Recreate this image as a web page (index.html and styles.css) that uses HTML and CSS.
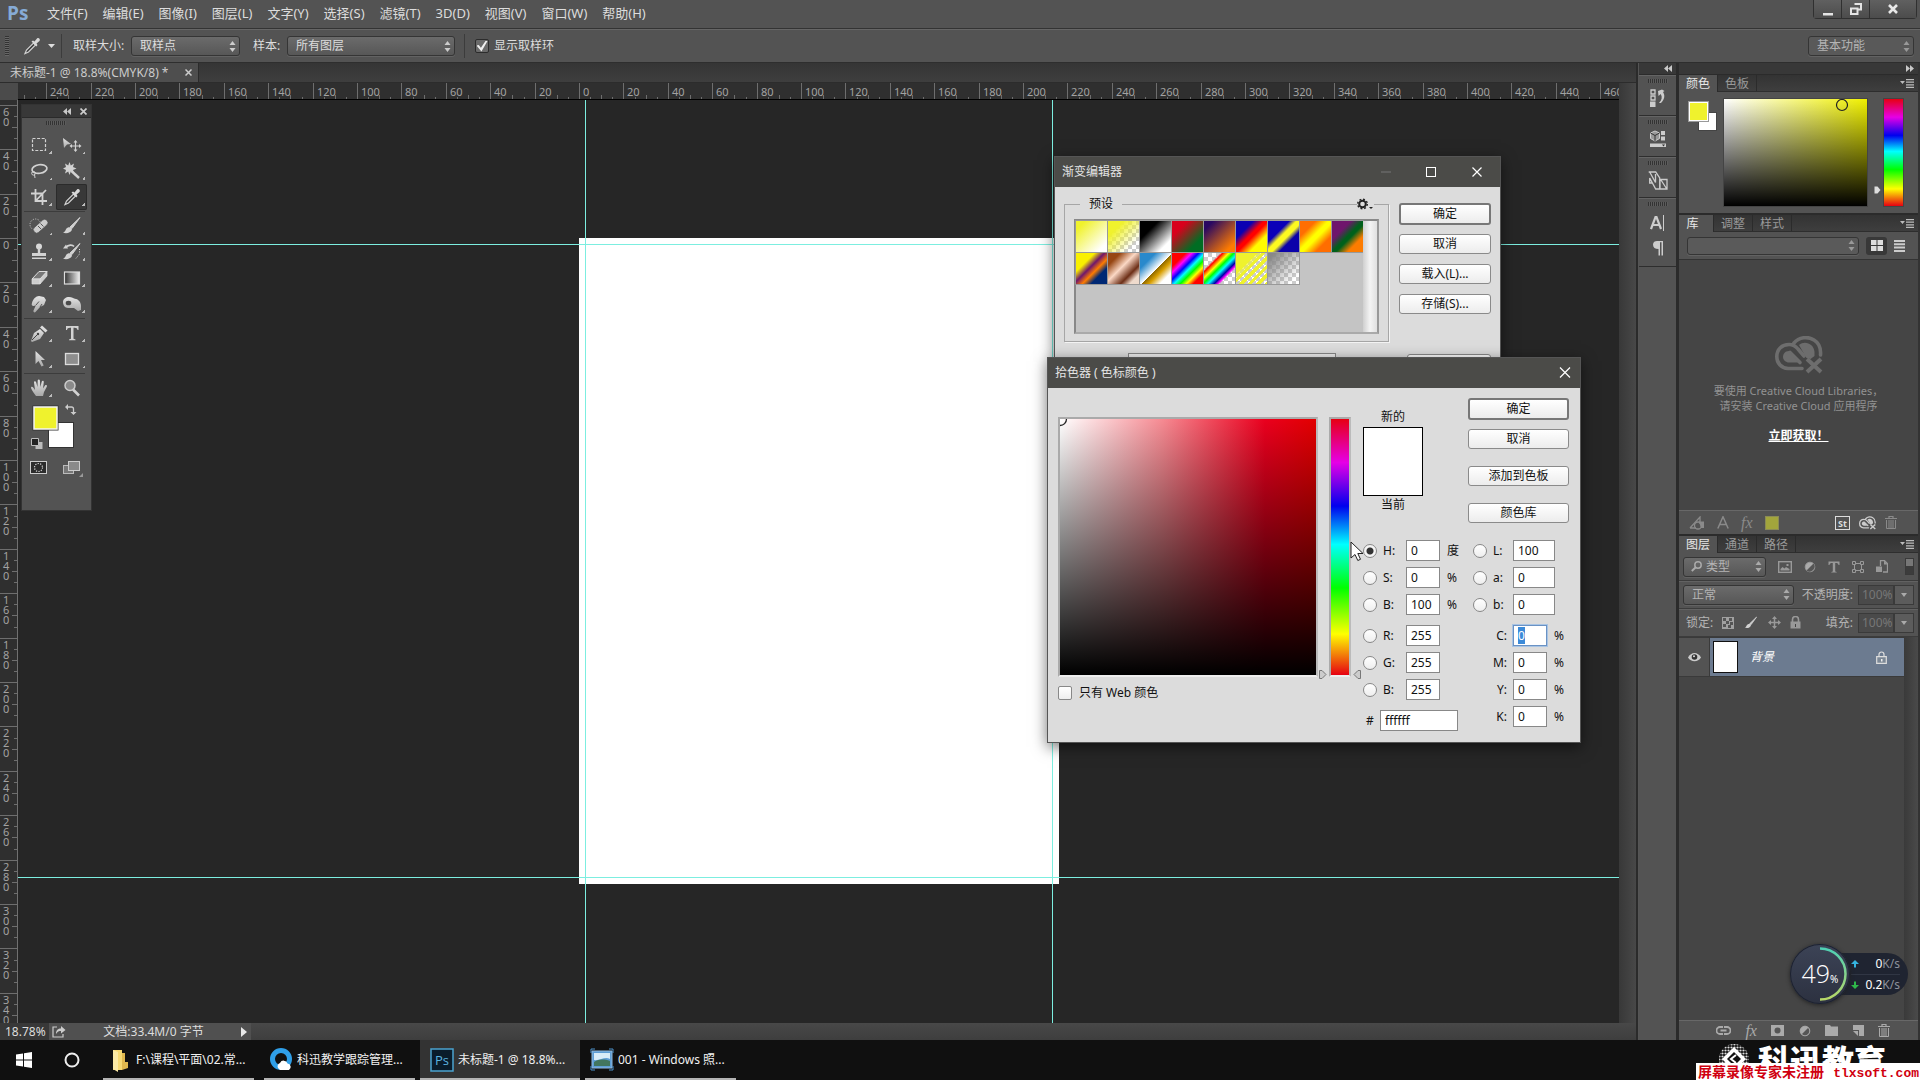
FILE: index.html
```html
<!DOCTYPE html>
<html lang="zh-CN">
<head>
<meta charset="utf-8">
<title>未标题-1 @ 18.8%(CMYK/8)</title>
<link rel="stylesheet" href="styles.css">
</head>
<body>
<svg class="defs" aria-hidden="true">
  <defs>
    <linearGradient id="metal" x1="0" y1="0" x2="0" y2="1"><stop offset="0" stop-color="#e4e4e4"/><stop offset="1" stop-color="#a8a8a8"/></linearGradient>
    <linearGradient id="fade" x1="0" y1="0" x2="1" y2="0"><stop offset="0" stop-color="#333"/><stop offset="1" stop-color="#eee"/></linearGradient>
    <linearGradient id="arc" x1="0" y1="0" x2="0" y2="1"><stop offset="0" stop-color="#4fd0b4"/><stop offset="1" stop-color="#b8d868"/></linearGradient>
    <pattern id="dots" width="3" height="3" patternUnits="userSpaceOnUse"><circle cx="1.5" cy="1.5" r="1.1" fill="#ddd"/></pattern>
    <symbol id="updown" viewBox="0 0 7 11"><path d="M3.500 0L6.500 4H.5zM3.500 11L6.500 7H.5z" fill="currentColor"/></symbol>
    <symbol id="panelmenu" viewBox="0 0 14 9"><path d="M0 2h5L2.500 5zM6 0h8v1.200H6zM6 2.600h8v1.200H6zM6 5.200h8v1.200H6zM6 7.800h8V9H6z" fill="currentColor"/></symbol>
    <symbol id="back" viewBox="0 0 8 7"><path d="M4 0v7L0 3.500zM8 0v7L4 3.500z" fill="#c8c8c8"/></symbol>
    <symbol id="dropper" viewBox="0 0 20 20"><path d="M3 17.500l1.500-3.500 7-7 2 2-7 7z" fill="#3a3a3a" stroke="#d2d2d2" stroke-width="1.200"/><path d="M9.500 5.500l1.500-1 1.500 1 2.500-3c1.500-1.500 3.800.7 2.500 2.500l-3 2.500 1 1.500-1.200 1.500z" fill="#d8d8d8"/></symbol>
    <symbol id="trash" viewBox="0 0 12 13"><path d="M0 2.500h12M4 2V.5h4V2" fill="none" stroke="currentColor" stroke-width="1.200"/><path d="M1.500 4v8.500h9V4M4 4v8M6 4v8M8 4v8" fill="none" stroke="currentColor"/></symbol>
    <symbol id="brush" viewBox="0 0 20 20"><path d="M18 1.500L10 12.500 8 11z" fill="#d2d2d2" stroke="#d2d2d2"/><path d="M8.500 11.500c2 1 2 3-.5 4.500s-5 1.500-7 .5c2-.5 2-1.500 3-3.200s3-2.300 4.500-1.800z" fill="#d2d2d2"/></symbol>
    <symbol id="cloud" viewBox="0 0 48 38"><g fill="none" stroke="currentColor" stroke-width="3.600" stroke-linecap="round"><path d="M19 7C24 1 33 0 39 4c5 3 7 9 6.500 15M27 32.500H13C6 32 1.800 27 1.800 20.500 2 13 7 8.500 14 8.500c4 0 7 2 9 4.500l6 7"/><path d="M25 26.500L15 16.500"/></g><path d="M14 15c-4 0-6 3-6 6s3 5.500 6 5.500h9zM24 9c6-5 15-1 15.500 7v4l-4 3-4-1z" fill="currentColor"/><path d="M32 23l14 13M46 23L32 36" stroke="currentColor" stroke-width="4"/></symbol>
  </defs>
</svg>

<header class="menubar">
  <span class="brand">Ps</span>
  <nav class="menus">
    <button>文件(F)</button><button>编辑(E)</button><button>图像(I)</button><button>图层(L)</button><button>文字(Y)</button><button>选择(S)</button><button>滤镜(T)</button><button>3D(D)</button><button>视图(V)</button><button>窗口(W)</button><button>帮助(H)</button>
  </nav>
  <div class="winctl">
    <button aria-label="最小化"><svg width="12" height="16"><path d="M1 12h10v2.500H1z" fill="#e4e4e4"/></svg></button>
    <button aria-label="还原"><svg width="14" height="14"><path d="M5.500 2h6.500v5.500H8.500M2 6.500h6.500V12H2z" fill="none" stroke="#e4e4e4" stroke-width="2"/></svg></button>
    <button class="wide" aria-label="关闭"><svg width="12" height="12"><path d="M2 2l8 8M10 2l-8 8" stroke="#e8e8e8" stroke-width="2.600"/></svg></button>
  </div>
</header>

<div class="options">
  <span class="grip-v"></span>
  <svg class="opt-tool" width="20" height="20"><use href="#dropper"/></svg>
  <svg class="opt-drop" width="7" height="4"><path d="M0 0h7L3.500 4z" fill="#ddd"/></svg>
  <span class="rule"></span>
  <label for="size">取样大小:</label>
  <span class="pick size"><select id="size"><option>取样点</option></select><svg><use href="#updown"/></svg></span>
  <label for="sample" class="second">样本:</label>
  <span class="pick sample"><select id="sample"><option>所有图层</option></select><svg><use href="#updown"/></svg></span>
  <span class="rule"></span>
  <label class="ring"><input type="checkbox" checked>显示取样环</label>
  <span class="pick workspace"><select aria-label="工作区"><option>基本功能</option></select><svg><use href="#updown"/></svg></span>
</div>

<main class="work">
  <section class="doc">
    <div class="doctabs"><div class="doctab"><span>未标题-1 @ 18.8%(CMYK/8) *</span><button aria-label="关闭标签"><svg width="7" height="7"><path d="M.5.5l6 6M6.500.5l-6 6" stroke="#ccc" stroke-width="1.500"/></svg></button></div></div>
    <div class="stage">
      <div class="corner"></div>
      <svg class="hruler" id="hruler"></svg>
      <svg class="vruler" id="vruler"></svg>
      <div class="canvas">
        <div class="page"></div>
        <i class="guide v g1"></i><i class="guide v g2"></i><i class="guide h g3"></i><i class="guide h g4"></i>
        <aside class="toolbox">
          <div class="toolhead"><svg width="8" height="7"><use href="#back"/></svg><svg width="7" height="7"><path d="M.5.5l6 6M6.500.5l-6 6" stroke="#ccc" stroke-width="1.700"/></svg></div>
          <span class="grip-h"></span>
          <div class="tools">
            <button aria-label="选框"><svg viewBox="0 0 20 20"><rect x="3.500" y="3.500" width="13" height="12" fill="none" stroke="#d2d2d2" stroke-width="1.200" stroke-dasharray="3 1.600"/></svg></button>
            <button aria-label="移动"><svg viewBox="0 0 20 20"><path d="M1 3l8 6-4 .6L2 13z" fill="url(#metal)"/><path d="M13.500 6.500v9M9 11h9" stroke="#d2d2d2" stroke-width="1.200"/><path d="M13.500 5l2 2.500h-4zM13.500 17l2-2.500h-4zM7.500 11L10 9v4zM19.500 11L17 9v4z" fill="#d2d2d2"/></svg></button>
            <button aria-label="套索"><svg viewBox="0 0 20 20"><ellipse cx="10.500" cy="8" rx="7.500" ry="4.300" transform="rotate(-8 10.500 8)" fill="none" stroke="#d2d2d2" stroke-width="1.700"/><circle cx="4.500" cy="12.300" r="1.800" fill="none" stroke="#d2d2d2"/><path d="M5.500 13.500l.5 3.500" stroke="#d2d2d2"/></svg></button>
            <button aria-label="魔棒"><svg viewBox="0 0 20 20"><path d="M7.500 1l1.300 3.500L12 2.500 11 6l3.500 1.500L11 9l1 3.500-3.200-2L7.500 14l-1.300-3.500L3 12.500 4 9 1 7.500 4 6 3 2.500l3.200 2z" fill="#d2d2d2"/><path d="M9.500 10l7.500 7" stroke="#d2d2d2" stroke-width="2.400"/></svg></button>
            <button aria-label="裁剪"><svg viewBox="0 0 20 20"><path d="M6.500 2v12H18M2 6.500h11.500V18M7 13.500L17 3" fill="none" stroke="#d2d2d2" stroke-width="1.800"/></svg></button>
            <button class="on" aria-label="吸管"><svg viewBox="0 0 20 20"><use href="#dropper"/></svg></button>
            <hr>
            <button aria-label="修复画笔"><svg viewBox="0 0 20 20"><circle cx="6.500" cy="8.500" r="5.500" fill="none" stroke="#d2d2d2" stroke-dasharray="1 1.500"/><rect x="3" y="7" width="17" height="6.500" rx="3" transform="rotate(-42 11.500 10)" fill="#ccc" stroke="#444" stroke-width=".6"/><path d="M9 10l3 3M11.500 7.500l3 3" stroke="#555"/></svg></button>
            <button aria-label="画笔"><svg viewBox="0 0 20 20"><use href="#brush"/></svg></button>
            <button aria-label="图章"><svg viewBox="0 0 20 20"><circle cx="10" cy="4.500" r="3" fill="#d8d8d8"/><path d="M8.800 6h2.400v5H17v3H3v-3h5.800zM3 15.500h14V17H3z" fill="#d2d2d2"/></svg></button>
            <button aria-label="历史画笔"><svg viewBox="0 0 20 20"><use href="#brush"/><path d="M3.500 5.500c3-3 7-3 8.500-1" fill="none" stroke="#d2d2d2" stroke-width="1.600"/><path d="M1 6.500l3-4 2 4z" fill="#d2d2d2"/><path d="M17.500 7v5l-4 5" stroke="#ddd" stroke-dasharray="1 1.400" fill="none"/></svg></button>
            <button aria-label="橡皮擦"><svg viewBox="0 0 20 20"><path d="M3 11l7-7.500h8L11 11z" fill="#777" stroke="#ddd"/><path d="M3 11h8v5H3zM11 11l7-7.500V8l-7 8z" fill="#ccc" stroke="#ddd" stroke-width=".7"/></svg></button>
            <button aria-label="渐变"><svg viewBox="0 0 20 20"><rect x="2.500" y="4" width="15" height="12" fill="url(#fade)" stroke="#ddd" stroke-width="1.200"/></svg></button>
            <button aria-label="涂抹"><svg viewBox="0 0 20 20"><path d="M3 9c1-4 4-7 7-7 2 0 3 1 5 1l2 3-2 5-4 2-4.500 5c-1 1-2.500 0-2-1.500L7 11l-2 1c-1.500.5-3-1-2-3z" fill="url(#metal)"/><path d="M7 11l3-3.500M11 13l2-3" stroke="#555" fill="none"/></svg></button>
            <button aria-label="海绵"><svg viewBox="0 0 20 20"><path d="M1 8c0-3 3-5 6-5s4 1.500 7 2 5 4 5 7v4l-3 1-4-3H6c-3 0-5-3-5-6z" fill="url(#metal)"/><ellipse cx="6.500" cy="9" rx="2.800" ry="2.300" fill="#4a4a4a"/></svg></button>
            <hr>
            <button aria-label="钢笔"><svg viewBox="0 0 20 20"><path d="M2 18l3-8 6-4 4 4-4 6-8 3z" fill="url(#metal)"/><path d="M3 17l5.500-5.500" stroke="#444"/><circle cx="9" cy="11" r="1.200" fill="#444"/><path d="M12 3.500l5.500 5" stroke="#ddd" stroke-width="3"/></svg></button>
            <button aria-label="文字"><svg viewBox="0 0 20 20"><path d="M4 3h12.500v4h-1c-.3-1.500-1-2.300-3-2.300h-1v11l2 .8v.7H7v-.7l2-.8v-11H8C6 4.700 5.300 5.500 5 7H4z" fill="#d2d2d2"/></svg></button>
            <button aria-label="路径选择"><svg viewBox="0 0 20 20"><path d="M6.500 2v13l3-3 3 5.500 2.200-1-2.700-5.500h4z" fill="url(#metal)"/></svg></button>
            <button aria-label="矩形"><svg viewBox="0 0 20 20"><rect x="3.500" y="4.500" width="13" height="11" fill="#8e8e8e" stroke="#ddd" stroke-width="1.300"/></svg></button>
            <hr>
            <button aria-label="抓手"><svg viewBox="0 0 20 20"><path d="M7 18c-2-3-4-5-5-8 0-1.500 1.500-1.500 2.200-.5L6 12 5 4.500c0-1.600 1.800-1.600 2.200 0L8.500 9l.2-6.500c.2-1.500 2-1.500 2.200 0L11.300 9l1.500-5.500c.5-1.300 2-1 2 .5l-.8 6.500 2-3c1-1 2.400-.3 1.800 1.200L15 14l-1 4z" fill="url(#metal)"/></svg></button>
            <button class="plain" aria-label="缩放"><svg viewBox="0 0 20 20"><path d="M11 11.500l6 6" stroke="#d2d2d2" stroke-width="2.600"/><circle cx="8" cy="7.500" r="5" fill="#8a8a8a" stroke="#ccc" stroke-width="1.500"/></svg></button>
          </div>
          <svg class="swatches" width="48" height="46" viewBox="0 0 48 46"><rect x="18.500" y="18.500" width="25" height="25" fill="#fff" stroke="#333"/><rect x="2.500" y="1.500" width="26" height="25" fill="#333"/><rect x="4" y="3" width="23" height="22" fill="#eff22d" stroke="#f4f4f4" stroke-width="1.500"/><path d="M38 3h3.500c1.500 0 2 .8 2 2v4" fill="none" stroke="#ccc" stroke-width="1.300"/><path d="M35 3l3-3v6zM43.500 11l-3-3h6z" fill="#ccc"/><path d="M5.500 38h7v7h-7z" fill="#bbb"/><path d="M1.500 34.500h7v7h-7z" fill="#222" stroke="#bbb"/></svg>
          <div class="modes"><svg width="17" height="13"><rect x=".5" y=".5" width="16" height="12" fill="#2c2c2c" stroke="#ccc"/><circle cx="8.500" cy="6.500" r="4" fill="none" stroke="#ddd" stroke-width="1.200" stroke-dasharray="1.200 1.300"/></svg><svg width="20" height="16"><rect x=".5" y="4.500" width="10" height="8" fill="#777" stroke="#bbb"/><rect x="5.500" y=".5" width="11" height="9" fill="#8a8a8a" stroke="#ccc"/><path d="M20 12v4h-4z" fill="#999"/></svg></div>
        </aside>
      </div>
      <div class="vscroll"></div>
    </div>
    <footer class="status">
      <input class="zoom" value="18.78%" aria-label="缩放比例">
      <div class="docinfo"><svg width="14" height="13"><path d="M5 2H1v10h10V9" fill="none" stroke="#ccc" stroke-width="1.200"/><path d="M4 9c0-4 2-5.500 5-5.500V1l4.500 4L9 8.500V6C7 6 5.500 6.500 4 9z" fill="#ccc"/></svg><span>文档:33.4M/0 字节</span><svg width="7" height="10"><path d="M0 0l6 5-6 5z" fill="#e8e8e8"/></svg></div>
    </footer>
  </section>

  <aside class="strip">
    <div class="dockhead"><svg width="8" height="7"><use href="#back"/></svg></div>
    <div class="group"><span class="grip-h"></span><svg width="16" height="18" viewBox="0 0 16 18"><path d="M1 1h4v4H1zM1 7h4v4H1z" fill="none" stroke="#ccc" stroke-width="1.300"/><path d="M0 12.500h5.500V18H0z" fill="#ccc"/><path d="M8 2l4-1.500L14.500 2l-1.500 1c2 3 2 7-2 11h-2c3-3 3.500-6 1.700-9L8.500 7z" fill="#ccc"/></svg></div>
    <div class="group"><span class="grip-h"></span><svg width="16" height="18" viewBox="0 0 16 18"><path d="M5 1l4.500 2v5.500L5 11 .5 8.500V3z" fill="#999" stroke="#ccc"/><path d="M.5 3L5 5.500 9.500 3M5 5.500V11" stroke="#333" fill="none"/><path d="M11 1h4v4h-4zM11 6.500h4v4h-4zM0 13.500h16V17H0z" fill="#ccc"/><path d="M12 14.500h3l-1.500 2z" fill="#333"/></svg></div>
    <div class="group"><span class="grip-h"></span><svg width="20" height="19" viewBox="0 0 20 19"><path d="M.7 1h7l4 6v11h-4L1.700 7v5h2.500M7.500 3v8.500L1.700 1M12 8.500h7V18h-7zM13 9l5.500 8.500" fill="none" stroke="#ccc" stroke-width="1.300"/></svg></div>
    <div class="group two"><span class="grip-h"></span><svg width="16" height="16" viewBox="0 0 16 16"><path d="M1 14L5.500 2h1L11 14M3 10h6" stroke="#ccc" stroke-width="2.200" fill="none"/><path d="M13.500 0v16" stroke="#ccc"/></svg><svg width="12" height="16" viewBox="0 0 12 16"><path d="M1 4.500C1 2 3 1 5 1h6v14.500H9.500V2.300H8v13.200H6.500V9C3 9 1 7.500 1 4.500z" fill="#ccc"/></svg></div>
  </aside>

  <aside class="panels">
    <div class="dockhead"><svg class="flip" width="8" height="7"><use href="#back"/></svg></div>
    <section class="colorpanel">
      <div class="tabs"><button class="on">颜色</button><button>色板</button><svg class="menu"><use href="#panelmenu"/></svg></div>
      <div class="colorbody">
        <svg width="30" height="32"><rect x="10.500" y="11.500" width="18" height="18" fill="#fff" stroke="#444"/><rect x="0" y="0" width="21" height="21" fill="#999"/><rect x="1.500" y="1.500" width="18" height="18" fill="#eff22d" stroke="#fff"/></svg>
        <div class="yfield"><svg width="14" height="14"><circle cx="7" cy="6" r="5.500" fill="none" stroke="#222" stroke-width="1.200"/></svg></div>
        <svg class="knob" width="7" height="8"><path d="M.5.5h3l3 3.500-3 3.500h-3z" fill="#ddd"/></svg>
        <div class="hue small"></div>
      </div>
    </section>
    <section class="library">
      <div class="tabs"><button class="on narrow">库</button><button>调整</button><button>样式</button><svg class="menu"><use href="#panelmenu"/></svg></div>
      <div class="libbar"><span class="pick lib"><select aria-label="库列表"><option></option></select><svg><use href="#updown"/></svg></span><button class="gridbtn" aria-label="网格"><svg width="12" height="11"><path d="M0 0h5.500v5H0zM6.500 0H12v5H6.500zM0 6h5.500v5H0zM6.500 6H12v5H6.500z" fill="#ddd"/></svg></button><button class="listbtn" aria-label="列表"><svg width="11" height="12"><path d="M0 0h11v2H0zM0 3.300h11v2H0zM0 6.600h11v2H0zM0 10h11v2H0z" fill="#ccc"/></svg></button></div>
      <div class="libbody">
        <svg class="cloud" width="48" height="38"><use href="#cloud"/></svg>
        <p>要使用 Creative Cloud Libraries，<br>请安装 Creative Cloud 应用程序</p>
        <a href="#">立即获取！</a>
      </div>
      <div class="foot lib-foot">
        <svg width="16" height="14"><path d="M1 12L11 1v7M1 12h6" fill="none" stroke="#8a8a8a" stroke-width="1.300"/><circle cx="9" cy="9.500" r="3.500" fill="none" stroke="#8a8a8a" stroke-width="1.300"/><path d="M10 5.500h5V12h-3z" fill="#8a8a8a"/></svg>
        <svg width="12" height="13"><path d="M.8 12.500L6 .8l5.200 11.700M2.500 8.500h7" fill="none" stroke="#8a8a8a" stroke-width="1.500"/></svg>
        <em>fx</em><i class="chip"></i>
        <div class="push">
          <svg width="15" height="14"><rect x=".5" y=".5" width="14" height="13" fill="none" stroke="#ddd"/><text x="3" y="11">St</text></svg>
          <svg class="smallcloud" width="17" height="14"><use href="#cloud"/></svg>
          <svg width="12" height="13"><use href="#trash"/></svg>
        </div>
      </div>
    </section>
    <section class="layers">
      <div class="tabs"><button class="on">图层</button><button>通道</button><button>路径</button><svg class="menu"><use href="#panelmenu"/></svg></div>
      <div class="lrow filter"><span class="pick kind"><svg class="lens" width="12" height="11"><circle cx="7" cy="4" r="3.200" fill="none" stroke="#aaa" stroke-width="1.500"/><path d="M4.500 6.500L.8 10" stroke="#aaa" stroke-width="2"/></svg><select aria-label="滤镜类型"><option>类型</option></select><svg><use href="#updown"/></svg></span>
        <svg width="14" height="12"><rect x=".7" y=".7" width="12.600" height="10.600" fill="none" stroke="#999" stroke-width="1.400"/><path d="M2.500 9.500V8l2-2 2 1.500L8 6l3.500 2v1.500zM8.500 3h2v2h-2z" fill="#999"/></svg>
        <svg width="12" height="12"><circle cx="6" cy="6" r="4.800" fill="#aaa" stroke="#999"/><path d="M9.500 2.500a5 5 0 0 1-7 7z" fill="#555"/></svg>
        <svg width="12" height="12"><path d="M.5.5h11V4h-1c-.3-1.500-1-2-2.500-2H7.200v8.500l1.500.5v.5H3.300V11l1.500-.5V2H4c-1.500 0-2.200.5-2.500 2h-1z" fill="#999"/></svg>
        <svg width="12" height="12"><path d="M2.500 2.500h7v7h-7z" fill="none" stroke="#999"/><path d="M.5.5h3v3h-3zM8.500.5h3v3h-3zM.5 8.500h3v3h-3zM8.500 8.500h3v3h-3z" fill="#555" stroke="#999"/></svg>
        <svg width="12" height="13"><path d="M4.500 6V.7h4l3 3V12H7" fill="none" stroke="#999" stroke-width="1.300"/><path d="M8 .5v4h3.500M0 6.500h6V12H0z" fill="#999"/></svg>
        <i class="switch"></i></div>
      <div class="lrow"><span class="pick blend"><select aria-label="混合模式"><option>正常</option></select><svg><use href="#updown"/></svg></span><label class="pct">不透明度:<input value="100%"></label><button class="drop" aria-label="不透明度滑块"><svg width="6" height="4"><path d="M0 0h6L3 4z" fill="#aaa"/></svg></button></div>
      <div class="lrow lock"><span>锁定:</span>
        <svg width="12" height="12"><rect width="12" height="12" fill="#a0a0a0"/><path d="M1 1h3v3H1zM7 1h3v3H7zM4 4h3v3H4zM8 5h3v3H8zM1 7h3v3H1zM6 8h3v3H6z" fill="#555"/></svg>
        <svg width="16" height="14" viewBox="0 0 20 20"><use href="#brush"/></svg>
        <svg width="13" height="13"><path d="M6.500 1.500v10M1.500 6.500h10" stroke="#999" stroke-width="1.500"/><path d="M6.500 0L9 3H4zM6.500 13L9 10H4zM0 6.500L3 4v5zM13 6.500L10 4v5z" fill="#999"/></svg>
        <svg width="11" height="13"><path d="M2.500 6V3.500a3 3 0 0 1 6 0V6" fill="none" stroke="#999" stroke-width="1.600"/><path d="M.5 5.500h10v7H.5z" fill="#999"/><path d="M5 8h1v3H5z" fill="#444"/></svg>
        <label class="pct">填充:<input value="100%"></label><button class="drop" aria-label="填充滑块"><svg width="6" height="4"><path d="M0 0h6L3 4z" fill="#aaa"/></svg></button></div>
      <div class="list">
        <div class="layer"><span class="eye"><svg width="13" height="10"><path d="M0 5.500c3-6 10-6 13 0-3 5-10 5-13 0z" fill="#ccc"/><circle cx="6.500" cy="5" r="2.800" fill="#333"/><circle cx="6" cy="4.200" r="1" fill="#ddd"/></svg></span><i class="thumb"></i><em>背景</em><svg width="11" height="13"><path d="M3 6V3.500a2.500 2.500 0 0 1 5 0V6" fill="none" stroke="#ddd" stroke-width="1.200"/><path d="M.7 5.700h9.600v6.600H.7z" fill="#7c8896" stroke="#ddd" stroke-width="1.200"/><path d="M5 8h1.500v2.500H5z" fill="#eee"/></svg></div>
        <div class="listscroll"></div>
      </div>
      <div class="foot layer-foot">
        <svg width="15" height="9"><path d="M7 1H4a3 3 0 0 0 0 7h3M8 1h3a3 3 0 0 1 0 7H8M4.500 4.500h6" fill="none" stroke="#aaa" stroke-width="1.800"/></svg>
        <em>fx</em>
        <svg width="13" height="11"><path d="M0 0h13v11H0z" fill="#aaa"/><circle cx="6.500" cy="5.500" r="3" fill="#555"/></svg>
        <svg width="12" height="12"><circle cx="6" cy="6" r="4.800" fill="#aaa" stroke="#aaa"/><path d="M9 3a4.200 4.200 0 0 1-6 6z" fill="#555"/></svg>
        <svg width="13" height="11"><path d="M0 0h5l1 1.500h7V11H0z" fill="#aaa"/></svg>
        <svg width="11" height="11"><path d="M0 0h11v11H6V5H0z" fill="#aaa"/><path d="M0 6h5v5z" fill="#aaa"/></svg>
        <svg width="12" height="13"><use href="#trash"/></svg>
      </div>
    </section>
  </aside>
</main>

<footer class="taskbar">
  <button class="tb" aria-label="开始"><svg width="16" height="16"><path d="M0 2.500L7 1.500v6H0zM8 1.300L16 0v7.500H8zM0 8.500h7v6l-7-1zM8 8.500h8V16l-8-1.300z" fill="#fff"/></svg></button>
  <button class="tb" aria-label="Cortana"><svg width="16" height="16"><circle cx="8" cy="8" r="6.500" fill="none" stroke="#eee" stroke-width="2"/></svg></button>
  <button class="task"><svg width="24" height="24"><path d="M5 2h9v20H5z" fill="#f6d974"/><path d="M14 5h3v9h3v6l-6 2z" fill="#e0b84e"/><path d="M5 2l5 2v20l-5-3z" fill="#fbe9a4"/></svg><span>F:\课程\平面\02.常...</span></button>
  <button class="task"><svg width="24" height="24"><circle cx="12" cy="11" r="8.500" fill="none" stroke="#2f9fe8" stroke-width="5"/><path d="M9 20a3.500 3.500 0 0 1 2-5 4 4 0 0 1 7.500.5A3.500 3.500 0 0 1 20 22h-9z" fill="#fff"/></svg><span>科迅教学跟踪管理...</span></button>
  <button class="task active"><svg width="24" height="24"><rect x="1" y="1" width="22" height="22" fill="#0a1c2b" stroke="#4ba3d0" stroke-width="1.500"/><text class="psicon" x="5" y="17">Ps</text></svg><span>未标题-1 @ 18.8%...</span></button>
  <button class="task"><svg width="24" height="24"><path d="M2 3h20v17H2z" fill="#5e9ed6" stroke="#8fb8dc"/><path d="M4 5h16v6c-5-3-10 2-16 1z" fill="#d8ecf8"/><path d="M4 14c5-3 10-3 16-1v5H4z" fill="#42765f"/><path d="M1 5V1h4M19 1h4v4M23 18v4h-4M5 22H1v-4" fill="none" stroke="#4d91c9"/></svg><span>001 - Windows 照...</span></button>
</footer>

<section class="dialog gradient" aria-label="渐变编辑器">
  <header><h2>渐变编辑器</h2><svg width="10" height="12"><path d="M0 6h10" stroke="#777"/></svg><svg width="11" height="11"><rect x=".5" y=".5" width="9" height="9" fill="none" stroke="#fff"/></svg><svg width="11" height="11"><path d="M.5.500l9 9M9.500.500l-9 9" stroke="#fff" stroke-width="1.200"/></svg></header>
  <div class="gbody">
    <div class="gmain">
      <fieldset><legend>预设</legend><svg class="gear" width="17" height="12"><circle cx="5.500" cy="6" r="3.300" fill="none" stroke="#222" stroke-width="2"/><circle cx="5.500" cy="6" r="4.800" fill="none" stroke="#222" stroke-width="1.400" stroke-dasharray="1.900 1.870"/><path d="M12 9h4l-2 2z" fill="#222"/></svg>
        <div class="presets"><div class="cells"><i class="p1"></i><i class="p2"></i><i class="p3"></i><i class="p4"></i><i class="p5"></i><i class="p6"></i><i class="p7"></i><i class="p8"></i><i class="p9"></i><i class="p10"></i><i class="p11"></i><i class="p12"></i><i class="p13"></i><i class="p14"></i><i class="p15"></i><i class="p16"></i></div><div class="pscroll"></div></div>
      </fieldset>
      <input class="gname" aria-label="名称">
    </div>
    <div class="gbtns"><button class="btn main">确定</button><button class="btn">取消</button><button class="btn">载入(L)...</button><button class="btn">存储(S)...</button><button class="btn new" aria-label="新建"></button></div>
  </div>
</section>

<section class="dialog picker" aria-label="拾色器">
  <header><h2>拾色器 ( 色标颜色 )</h2><svg width="12" height="12"><path d="M1 .5l10 10M11 .5L1 10.500" stroke="#fff" stroke-width="1.200"/></svg></header>
  <div class="pbody">
    <div class="fieldcol">
      <div class="field"><svg width="8" height="8"><path d="M6.500 0a6.500 6.500 0 0 1-6.500 6.500" fill="none" stroke="#222" stroke-width="1.300"/></svg></div>
      <label class="web"><input type="checkbox">只有 Web 颜色</label>
    </div>
    <div class="huecol"><svg width="8" height="9"><path d="M.5.500h2.500l4 4-4 4H.5z" fill="#ccc" stroke="#777"/></svg><div class="hue"></div><svg width="8" height="9"><path d="M7.500.500H5L1 4.500l4 4h2.500z" fill="#ccc" stroke="#777"/></svg></div>
    <div class="right">
      <div class="top">
        <div class="preview"><span>新的</span><i></i><span>当前</span></div>
        <div class="pbtns"><button class="btn main">确定</button><button class="btn">取消</button><button class="btn far">添加到色板</button><button class="btn far">颜色库</button></div>
      </div>
      <div class="values">
        <div class="vcol">
          <div class="vrow"><input type="radio" name="ch" id="rh" checked><label for="rh">H:</label><input class="num" value="0" aria-label="H"><span>度</span></div>
          <div class="vrow"><input type="radio" name="ch" id="rs"><label for="rs">S:</label><input class="num" value="0" aria-label="S"><span>%</span></div>
          <div class="vrow"><input type="radio" name="ch" id="rb"><label for="rb">B:</label><input class="num" value="100" aria-label="B"><span>%</span></div>
          <div class="vrow first"><input type="radio" name="ch" id="rr"><label for="rr">R:</label><input class="num" value="255" aria-label="R"></div>
          <div class="vrow"><input type="radio" name="ch" id="rg"><label for="rg">G:</label><input class="num" value="255" aria-label="G"></div>
          <div class="vrow"><input type="radio" name="ch" id="rbl"><label for="rbl">B:</label><input class="num" value="255" aria-label="B 蓝"></div>
          <div class="vrow first hexrow"><label for="hex">#</label><input class="num hex" id="hex" value="ffffff"></div>
        </div>
        <div class="vcol second">
          <div class="vrow"><input type="radio" name="ch" id="rl"><label for="rl">L:</label><input class="num wide" value="100" aria-label="L"></div>
          <div class="vrow"><input type="radio" name="ch" id="ra"><label for="ra">a:</label><input class="num wide" value="0" aria-label="a"></div>
          <div class="vrow"><input type="radio" name="ch" id="rlb"><label for="rlb">b:</label><input class="num wide" value="0" aria-label="b"></div>
          <div class="vrow first"><label class="ink" for="c">C:</label><input class="num focus" id="c" value="0"><span>%</span></div>
          <div class="vrow"><label class="ink" for="m">M:</label><input class="num" id="m" value="0"><span>%</span></div>
          <div class="vrow"><label class="ink" for="y">Y:</label><input class="num" id="y" value="0"><span>%</span></div>
          <div class="vrow"><label class="ink" for="k">K:</label><input class="num" id="k" value="0"><span>%</span></div>
        </div>
      </div>
    </div>
  </div>
</section>

<svg class="cursor" width="14" height="22"><path d="M1 1v16l4-3.500 2.800 6 2.700-1.200-2.700-5.800H13z" fill="#fff" stroke="#222"/></svg>

<div class="speed">
  <div class="rates"><div><svg width="8" height="8"><path d="M4 0l4 4H5v3.500H3V4H0z" fill="#35b4e0"/></svg><b>0</b>K/s</div><div><svg width="8" height="8"><path d="M4 8l4-4H5V.5H3V4H0z" fill="#2fb84a"/></svg><b>0.2</b>K/s</div></div>
  <div class="dial"><svg width="60" height="60"><path d="M30 4.500a25.500 25.500 0 0 1 0 51" fill="none" stroke="url(#arc)" stroke-width="2.500"/></svg><span>49</span><small>%</small></div>
</div>

<div class="logo"><svg width="32" height="32"><circle cx="16" cy="16" r="15" fill="url(#dots)"/><path d="M16 4l12 12-12 12L4 16z" fill="#fff"/><path d="M16 9l7 7-7 7-7-7z" fill="#111"/><path d="M18 12l-5 4 5 4" fill="none" stroke="#fff" stroke-width="2"/></svg><strong>科迅教育</strong></div>
<div class="notice">屏幕录像专家未注册 <span>tlxsoft.com</span></div>
<script src="script.js"></script>
</body>
</html>
```
FILE: styles.css
```css
* { box-sizing: border-box; }
html, body { height: 100%; }
body {
  margin: 0; display: flex; flex-direction: column; overflow: hidden; background: #535353; color: #ddd;
  font: 12px/16px "Noto Sans", "Noto Sans CJK SC", sans-serif;
}
button, input, select { font: inherit; color: inherit; margin: 0; padding: 0; border: 0; background: none; border-radius: 0; outline: 0; }
select { appearance: none; }
svg { display: block; flex: none; }
.defs { position: absolute; width: 0; height: 0; }

.menubar { height: 29px; flex: none; display: flex; align-items: center; padding: 0 0 2px 7px; border-bottom: 1px solid #333; }
.brand { width: 40px; font: bold 19px/24px "Open Sans", sans-serif; color: #86abd6; }
.menus { display: flex; gap: 15px; font-size: 13px; flex: 1; }
.winctl { display: flex; align-self: flex-start; margin-right: 3px; border: 1px solid #303030; border-top: 0; border-radius: 0 0 4px 4px; }
.winctl button { width: 28px; height: 18px; display: flex; justify-content: center; align-items: center; background: linear-gradient(#606060, #4c4c4c); border-right: 1px solid #303030; }
.winctl .wide { width: 46px; border-right: 0; }

.options { height: 34px; flex: none; display: flex; align-items: center; padding: 0 6px 0 5px; border-top: 1px solid #666; border-bottom: 1px solid #2e2e2e; }
.grip-v { width: 4px; height: 20px; background: repeating-linear-gradient(#333 0 1px, #666 1px 2px); }
.opt-tool { margin-left: 13px; }
.opt-drop { margin: 0 6px; }
.rule { width: 1px; height: 24px; background: #3c3c3c; }
.options .rule + label { margin-left: 11px; width: 58px; }
.options .second { margin-left: 13px; width: 34px; }
.pick { display: grid; height: 20px; align-items: center; }
.pick select { grid-area: 1/1; width: 100%; height: 100%; padding-left: 8px; border: 1px solid #353535; border-radius: 3px; background: linear-gradient(#6b6b6b, #575757); box-shadow: 0 1px 0 #626262; }
.pick > svg { grid-area: 1/1; width: 7px; height: 11px; justify-self: end; margin-right: 4px; color: #ccc; pointer-events: none; }
.size { width: 109px; }
.sample { width: 168px; }
.sample + .rule { margin-left: 9px; }
.options .rule + .ring { display: flex; gap: 5px; align-items: center; margin-left: 10px; width: auto; }
.ring input { appearance: none; width: 14px; height: 14px; border: 1px solid #2c2c2c; border-radius: 2px; background: #6a6a6a; display: grid; place-items: center; }
.ring input::before { content: ""; width: 11px; height: 11px; background: #f0f0f0; clip-path: polygon(0 45%, 20% 40%, 40% 65%, 85% 0, 100% 5%, 45% 100%); }
.options .workspace { margin-left: auto; width: 106px; color: #b4b4b4; }
.workspace svg { color: #999; }
.workspace select { background: #595959; }

.work { flex: 1; display: flex; min-height: 0; }
.doc { flex: 1; min-width: 0; display: flex; flex-direction: column; border-right: 2px solid #2b2b2b; background: #424242; }
.doctabs { height: 20px; flex: none; background: linear-gradient(#353535, #3e3e3e); border-bottom: 1px solid #2c2c2c; display: flex; }
.doctab { width: 199px; padding: 0 6px 0 10px; display: flex; align-items: center; justify-content: space-between; background: #4e4e4e; border-right: 1px solid #2b2b2b; color: #ccc; font-size: 12px; white-space: nowrap; }
.stage { flex: 1; min-height: 0; display: grid; grid-template: 17px minmax(0, 1fr) / 18px minmax(0, 1fr) 17px; }
.corner { background: #4b4b4b; }
.hruler, .vruler { width: 100%; height: 100%; background: #2f2f2f; overflow: hidden; }
.hruler { border-bottom: 1px solid #000; }
.vruler { border-right: 1px solid #707070; }
.tick { fill: #6e6e6e; }
.hruler text, .vruler text { fill: #a2a2a2; font-size: 11px; }
.canvas { grid-row: 2; grid-column: 2; position: relative; overflow: hidden; background: #262626; }
.vscroll { grid-row: 1 / 3; grid-column: 3; background: linear-gradient(to right, #383838, #484848); }
.page { position: absolute; left: 561px; top: 138px; width: 480px; height: 646px; background: #fff; }
.guide { position: absolute; background: #7ceee0; }
.v { width: 1px; top: 0; bottom: 0; }
.h { height: 1px; left: 0; right: 0; }
.g1 { left: 567px; }
.g2 { left: 1034px; }
.g3 { top: 144px; }
.g4 { top: 777px; }
.status { height: 17px; flex: none; display: flex; background: linear-gradient(#484848, #3e3e3e); color: #ddd; }
.zoom { width: 49px; padding-left: 5px; background: #383838; height: 17px; }
.docinfo { width: 202px; display: flex; align-items: center; justify-content: space-between; padding: 0 3px; background: #505050; }

.toolbox { position: absolute; left: 3px; top: 4px; width: 71px; height: 407px; background: #535353; border: 1px solid #333; display: flex; flex-direction: column; }
.toolhead { height: 13px; background: #383838; border-bottom: 1px solid #2a2a2a; display: flex; align-items: center; justify-content: flex-end; gap: 9px; padding-right: 4px; }
.grip-h { display: block; width: 20px; height: 4px; flex: none; background: repeating-linear-gradient(to right, #333 0 1px, #5c5c5c 1px 2px); }
.toolbox .grip-h { margin: 3px 0 0 24px; }
.tools { margin: 7px 3px 0 1px; display: grid; grid-template-columns: 31px 31px; column-gap: 2px; }
.tools button { height: 26px; display: grid; place-items: center; border-radius: 2px; }
.tools button svg { grid-area: 1/1; width: 20px; height: 20px; }
.tools button::after { content: ""; grid-area: 1/1; place-self: end; width: 3px; height: 3px; margin: 0 2px 4px 0; background: linear-gradient(135deg, transparent 50%, #bbb 50%); }
.tools .plain::after { background: none; }
.tools .on { background: #383838; box-shadow: 0 0 0 1px #2b2b2b inset; }
.tools hr { grid-column: 1 / 3; width: 61px; height: 1px; margin: 1px; border: 0; background: #3c3c3c; }
.swatches { margin: 3px 0 0 8px; }
.modes { display: flex; gap: 16px; margin: 11px 0 0 8px; }

.strip { width: 41px; border-left: 1px solid #555; border-right: 3px solid #2b2b2b; display: flex; flex-direction: column; }
.dockhead { height: 12px; flex: none; background: #383838; border-bottom: 1px solid #2b2b2b; display: flex; align-items: center; justify-content: flex-end; padding-right: 4px; }
.flip { transform: rotate(180deg); }
.group { height: 41px; flex: none; padding-top: 3px; display: flex; flex-direction: column; align-items: center; gap: 6px; border-bottom: 1px solid #2e2e2e; border-top: 1px solid #646464; }
.two { height: 69px; gap: 9px; }

.panels { width: 241px; display: flex; flex-direction: column; border-right: 2px solid #333; }
.tabs { height: 17px; flex: none; display: flex; background: linear-gradient(#333, #3e3e3e); border-bottom: 1px solid #2e2e2e; color: #999; }
.tabs button { width: 39px; border-right: 1px solid #2b2b2b; line-height: 15px; }
.tabs .narrow { width: 35px; padding-right: 7px; }
.tabs .on { background: #535353; color: #e8e8e8; height: 17px; }
.menu { width: 14px; height: 9px; margin: 4px 4px 0 auto; color: #bbb; }
.colorpanel { height: 140px; border-bottom: 2px solid #2b2b2b; }
.colorbody { display: flex; padding: 6px 14px 0 9px; }
.colorbody > svg:first-child { margin-top: 3px; }
.yfield { flex: 1; max-width: 145px; height: 109px; margin-left: 5px; border: 1px solid #444; background: linear-gradient(to top, #000, transparent), linear-gradient(to right, #fff, #f0f000); display: flex; justify-content: flex-end; }
.yfield svg { margin-right: 18px; }
.knob { margin: 88px 2px 0 6px; }
.hue { width: 22px; height: 260px; border: 2px solid #aaa; border-color: #aaa #bbb #eee #aaa; background: linear-gradient(#e60012, #e600e6 17%, #00e 34%, #0ff 49%, #0f0 66%, #ff0 84%, #e60012); }
.small { width: 21px; height: 109px; border: 1px solid #444; }
.library { height: 321px; display: flex; flex-direction: column; border-bottom: 2px solid #2b2b2b; }
.libbar { height: 28px; display: flex; align-items: center; padding-left: 8px; border-bottom: 1px solid #333; }
.lib { width: 172px; height: 18px; }
.lib select { background: #5a5a5a; }
.lib svg { color: #999; }
.gridbtn { width: 21px; height: 18px; margin-left: 7px; display: grid; place-items: center; background: #383838; border-radius: 3px; }
.listbtn { margin-left: 7px; }
.libbody { flex: 1; background: #454545; display: flex; flex-direction: column; align-items: center; padding-top: 76px; color: #929292; }
.cloud { color: #6d6d6d; }
.libbody p { margin: 9px 0 15px; text-align: center; font-size: 11px; line-height: 15px; white-space: nowrap; }
.libbody a { color: #fff; font-weight: bold; line-height: 15px; }
.foot { flex: none; display: flex; align-items: center; border-top: 1px solid #686868; color: #aaa; }
.foot em { font: italic 16px/16px "Liberation Serif", serif; }
.lib-foot { height: 24px; padding: 0 21px 0 10px; gap: 12px; color: #8a8a8a; }
.push { margin-left: auto; display: flex; align-items: center; gap: 9px; }
.lib-foot text { font: bold 9px "Open Sans", sans-serif; fill: #ddd; }
.chip { width: 14px; height: 14px; background: #a2a53c; border: 1px solid #8b8b55; }
.smallcloud { color: #ccc; }
.layers { flex: 1; min-height: 0; display: flex; flex-direction: column; color: #b4b4b4; }
.lrow { height: 28px; flex: none; display: flex; align-items: center; padding: 0 4px; border-bottom: 1px solid #3c3c3c; box-shadow: 0 1px 0 #626262; }
.pick.kind { width: 83px; }
.kind .lens { width: 12px; height: 11px; justify-self: start; margin-left: 8px; z-index: 1; }
.kind select { padding-left: 22px; }
.kind, .blend { color: #b4b4b4; }
.kind svg, .blend svg { color: #aaa; }
.blend { width: 111px; }
.filter { gap: 12px; }
.switch { width: 9px; height: 17px; margin-left: auto; background: linear-gradient(#777 50%, #3c3c3c 50%); border: 1px solid #3a3a3a; }
.pct { margin-left: auto; display: flex; align-items: center; gap: 5px; white-space: nowrap; }
.pct input { width: 36px; height: 20px; padding-left: 3px; color: #777; background: #4a4a4a; border: 1px solid #3a3a3a; }
.drop { width: 20px; height: 20px; display: grid; place-items: center; background: #5c5c5c; border: 1px solid #3a3a3a; }
.lock { gap: 9px; padding-left: 7px; }
.lock .drop { margin-left: -9px; }
.list { flex: 1; min-height: 0; display: flex; align-items: flex-start; background: #454545; }
.layer { flex: 1; height: 40px; display: flex; align-items: center; padding-right: 17px; border-top: 1px solid #3a3a3a; border-bottom: 1px solid #3a3a3a; background: #6c7b90; }
.eye { width: 31px; height: 38px; display: grid; place-items: center; background: #535353; border-right: 1px solid #3a3a3a; }
.thumb { width: 25px; height: 32px; margin-left: 3px; background: #fff; border: 1px solid #111; }
.layer em { margin-left: 12px; color: #fff; flex: 1; }
.listscroll { width: 14px; align-self: stretch; background: linear-gradient(to right, #3a3a3a, #4a4a4a); }
.layer-foot { height: 20px; justify-content: space-between; padding: 0 28px 0 37px; }

.taskbar { height: 40px; flex: none; display: flex; background: #101010; color: #f0f0f0; }
.tb { width: 48px; display: grid; place-items: center; }
.task { width: 151px; margin-right: 10px; padding: 2px 0 0 5px; display: flex; align-items: center; gap: 4px; border-bottom: 2px solid #b4b4b4; white-space: nowrap; }
.tb + .task { margin-left: 7px; }
.active { background: #333; width: 160px; padding-left: 10px; margin: 0 5px 0 -5px; }
.psicon { font: 13px "Open Sans", sans-serif; fill: #5ab4e0; }

.dialog { position: absolute; display: flex; flex-direction: column; background: #dcdcdc; color: #111; border: 1px solid #555; box-shadow: 0 4px 14px rgba(0, 0, 0, .55); }
.dialog header { height: 30px; flex: none; display: flex; align-items: center; background: #4b4b48; color: #e4e4e4; }
.dialog h2 { margin: 0; flex: 1; font: 12px/16px "Noto Sans", "Noto Sans CJK SC", sans-serif; padding-left: 7px; }
.gradient { left: 1054px; top: 156px; width: 447px; height: 202px; overflow: hidden; }
.gradient header { padding-right: 17px; gap: 35px; }
.gbody { display: flex; justify-content: space-between; padding: 16px 9px 0 9px; }
.gmain { width: 325px; display: flex; flex-direction: column; }
fieldset { margin: 0 0 11px; height: 139px; min-width: 0; position: relative; border: 1px solid #a6a6a6; box-shadow: 1px 1px 0 #f4f4f4; padding: 0 9px; }
legend { margin-left: 6px; padding: 0 9px; line-height: 2px; height: 2px; }
.gear { position: absolute; right: 14px; top: -7px; background: #dcdcdc; }
.presets { margin-top: 14px; height: 115px; border: 2px solid #999; border-color: #888 #999 #aaa #888; background: #c4c4c4; display: flex; }
.cells { flex: 1; display: grid; grid-template-columns: repeat(9, 31px); grid-auto-rows: 31px; gap: 1px; align-content: start; }
.cells i { box-shadow: 0 0 0 1px #999; }
.pscroll { width: 14px; background: linear-gradient(to right, #cfcfcf, #f4f4f4 50%, #e0e0e0); }
.p1 { background: linear-gradient(135deg, #f0f22d 15%, #fff 85%); }
.p2 { background: linear-gradient(135deg, #f0f22d 25%, transparent 80%), conic-gradient(#ccc 25%, #fff 0 50%, #ccc 0 75%, #fff 0) 0 0 / 8px 8px; }
.p3 { background: linear-gradient(135deg, #000 30%, #fff 80%); }
.p4 { background: linear-gradient(135deg, #d8001c 25%, #006d23 75%); }
.p5 { background: linear-gradient(135deg, #290862 15%, #ff7c00 85%); }
.p6 { background: linear-gradient(135deg, #0a00b2 28%, #f00 46%, #f00 52%, #fffc00 72%); }
.p7 { background: linear-gradient(135deg, #0b01b8 34%, #fdfa20 46%, #fdfa20 56%, #0b02aa 68%); }
.p8 { background: linear-gradient(135deg, #ff6e02 25%, #ff0 46%, #ff0 54%, #ff6d00 75%); }
.p9 { background: linear-gradient(135deg, #6f156c 30%, #00601b 50%, #00601b 56%, #fd7c00 75%); }
.p10 { background: linear-gradient(135deg, #f9f000 30%, #6f156c 46%, #fd7c00 60%, #002874 74%); }
.p11 { background: linear-gradient(135deg, #974613 20%, #fbd8c5 45%, #6c2e16 70%, #efdbcd 85%); }
.p12 { background: linear-gradient(135deg, #2989cc 25%, #fff 52%, #906a00 53%, #d99f00 64%, #fff 82%); }
.p13 { background: linear-gradient(135deg, red 22%, #f0f 32%, #00f 43%, #0ff 53%, #0f0 63%, #ff0 73%, red 84%); }
.p14 { background: linear-gradient(135deg, transparent 26%, red 30%, #ff0 40%, #0f0 48%, #0ff 56%, #00a 66%, #f0f 72%, transparent 76%), conic-gradient(#ccc 25%, #fff 0 50%, #ccc 0 75%, #fff 0) 0 0 / 8px 8px; }
.p15 { background: repeating-linear-gradient(135deg, #eff22d 0 3px, transparent 3px 6px), linear-gradient(135deg, #eff22d 30%, transparent 50%), conic-gradient(#ccc 25%, #fff 0 50%, #ccc 0 75%, #fff 0) 0 0 / 8px 8px; }
.p16 { background: linear-gradient(135deg, #888 10%, transparent 85%), conic-gradient(#ccc 25%, #fff 0 50%, #ccc 0 75%, #fff 0) 0 0 / 8px 8px; }
.gname { width: 208px; height: 22px; margin-left: 64px; border: 1px solid #888; background: #eee; }
.gbtns { width: 92px; display: flex; flex-direction: column; gap: 10px; }
.btn { height: 20px; flex: none; line-height: 16px; background: linear-gradient(#fff, #ececec); border: 1px solid #8a8a8a; border-radius: 3px; }
.main { height: 22px; border-width: 2px; border-color: #777; }
.gbtns .main { margin-bottom: -1px; }
.new { width: 84px; margin: 30px 0 0 8px; }

.picker { left: 1047px; top: 357px; width: 534px; height: 386px; }
.picker header { padding-right: 9px; }
.pbody { display: flex; padding: 10px 11px 0 10px; flex: 1; }
.fieldcol { width: 260px; padding-top: 19px; }
.field { height: 260px; border: 2px solid #aaa; border-bottom-color: #eee; border-right-color: #bbb; background: linear-gradient(to top, #000, transparent), linear-gradient(to right, #fff, #f68a92 40%, #ea001e 80%, #e20000); }
.web { display: flex; align-items: center; gap: 7px; margin-top: 8px; }
.web input, .vrow [type=radio] { appearance: none; width: 14px; height: 14px; flex: none; border: 1px solid #888; background: linear-gradient(#fff, #eee); }
.web input { border-radius: 2px; }
.huecol { width: 45px; padding: 19px 0 0 1px; display: flex; gap: 2px; }
.huecol > svg { margin-top: 253px; }
.right { flex: 1; min-width: 0; }
.top { height: 142px; display: flex; justify-content: space-between; }
.preview { width: 60px; padding-top: 11px; text-align: center; }
.preview i { display: block; height: 69px; margin: 2px 0 1px; background: #fff; border: 1px solid #000; }
.pbtns { width: 101px; display: flex; flex-direction: column; gap: 9px; }
.far { margin-top: 8px; }
.values { display: flex; gap: 14px; }
.vcol { width: 96px; }
.vrow { height: 21px; display: flex; align-items: center; gap: 6px; margin-bottom: 6px; white-space: nowrap; }
.vrow span { padding-left: 1px; }
.first { margin-top: 10px; }
.vrow label { width: 17px; }
.second .vrow label { width: 14px; }
.second .vrow .ink { width: 34px; text-align: right; }
.vrow [type=radio] { border-radius: 50%; }
.vrow [type=radio]:checked { background: radial-gradient(#333 0 3px, #f4f4f4 4px); }
.num { width: 34px; height: 21px; flex: none; padding-left: 4px; border: 1px solid #888; background: #fff; }
.num.wide { width: 42px; }
.num.hex { width: 78px; }
.vrow.hexrow label { padding-left: 3px; width: 11px; }
.num.focus { border: 1px solid #6a92c4; box-shadow: 0 0 0 1px #a8c4e4; }
.focus::selection { background: #3c8ad8; color: #fff; }
.cursor { position: absolute; left: 1350px; top: 541px; pointer-events: none; }

.speed { position: absolute; right: 12px; bottom: 76px; width: 118px; height: 60px; display: flex; justify-content: flex-end; align-items: center; }
.rates { width: 80px; height: 42px; border-radius: 0 21px 21px 0; background: #1f2431; padding: 1px 8px 1px 23px; color: #8d929c; }
.rates div { height: 20px; display: flex; align-items: center; }
.rates b { font-weight: normal; color: #fff; margin-left: auto; }
.rates div + div { border-top: 1px solid #303644; }
.dial { position: absolute; left: 0; top: 0; width: 60px; height: 60px; border-radius: 50%; background: linear-gradient(#3c4356, #2c3140); box-shadow: 0 0 0 1px #1d2230 inset, 0 1px 4px #222; display: flex; align-items: baseline; justify-content: center; }
.dial svg { position: absolute; left: 0; top: 0; }
.dial span { font: 300 25px/58px "Open Sans", sans-serif; color: #fff; }
.dial small { font-size: 10px; color: #fff; }
.logo { position: absolute; right: 34px; bottom: 0; height: 37px; display: flex; gap: 8px; overflow: hidden; color: #fff; }
.logo strong { font: 900 32px/32px "Noto Sans CJK SC", sans-serif; }
.notice { position: absolute; right: 0; bottom: 0; height: 17px; padding: 0 1px 0 2px; background: #fff; color: #d00010; font: bold 14px/17px "Noto Sans CJK SC", sans-serif; white-space: nowrap; }
.notice span { font: bold 13px/17px "Liberation Mono", monospace; margin-left: 6px; }
```
FILE: script.js
```js
const NS = "http://www.w3.org/2000/svg";
const UNIT = 2.22; // pixels per millimetre at 18.78 %

function add(parent, name, attrs, text) {
  const el = document.createElementNS(NS, name);
  for (const key in attrs) el.setAttribute(key, attrs[key]);
  if (text !== undefined) el.textContent = text;
  parent.appendChild(el);
  return el;
}

function tickLength(mm, full) {
  return mm % 20 === 0 ? full : mm % 10 === 0 ? 5 : 3;
}

const h = document.getElementById("hruler");
for (let mm = -250; mm <= 460; mm += 5) {
  const x = Math.round(561 + mm * UNIT);
  const len = tickLength(mm, 17);
  add(h, "rect", { class: "tick", x, y: 17 - len, width: 1, height: len });
  if (mm % 20 === 0) add(h, "text", { x: x + 4, y: 13 }, Math.abs(mm));
}

const v = document.getElementById("vruler");
for (let mm = -60; mm <= 350; mm += 5) {
  const y = Math.round(138 + mm * UNIT);
  const len = tickLength(mm, 17);
  add(v, "rect", { class: "tick", x: 17 - len, y, width: len, height: 1 });
  if (mm % 20 === 0) {
    const label = add(v, "text", {});
    String(Math.abs(mm)).split("").forEach((digit, i) => {
      add(label, "tspan", { x: 3, y: y + 11 + i * 10 }, digit);
    });
  }
}

const cyan = document.getElementById("c");
cyan.focus();
cyan.select();
```
